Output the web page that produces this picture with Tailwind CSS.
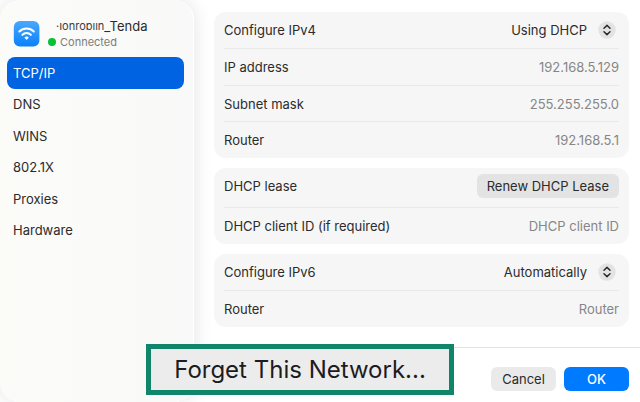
<!DOCTYPE html>
<html lang="en">
<head>
  <meta charset="UTF-8" />
  <meta name="viewport" content="width=device-width, initial-scale=1.0"/>
  <title>Network Details</title>
  <script src="https://cdn.jsdelivr.net/npm/@tailwindcss/browser@4"></script>
</head>
<body class="relative flex min-h-screen overflow-hidden bg-white font-['Inter',sans-serif] text-[13px] leading-4 text-[#2b2b2b]">

  <!-- Sidebar -->
  <aside class="w-[194px] shrink-0 rounded-[20px] border-r border-white bg-linear-to-r from-[#fbfbf8] to-[#f9f9f9] pt-[18px] shadow-[0_0_18px_2px_rgba(0,0,0,0.09)]">
    <div class="flex items-center gap-2 pl-3">
      <svg class="size-7 shrink-0" viewBox="0 0 28 28" fill="none" role="img" aria-label="Wi-Fi">
        <defs>
          <linearGradient id="wifiBg" x1="0" y1="0" x2="0" y2="1">
            <stop offset="0" stop-color="#4aa8fb"/>
            <stop offset="1" stop-color="#0a80fb"/>
          </linearGradient>
        </defs>
        <rect x="1.8" y="1" width="25.6" height="25.6" rx="6" fill="url(#wifiBg)"/>
        <path d="M7.4 11.4a10.4 10.4 0 0 1 14.4 0M10.4 14.8a6.2 6.2 0 0 1 8.4 0" stroke="#fff" stroke-width="2.1" stroke-linecap="round"/>
        <path d="M14.6 20l-2.3-2.4a3.3 3.3 0 0 1 4.6 0z" fill="#fff"/>
      </svg>
      <div>
        <p class="flex pl-2">
          <!-- network name is partly smudged out -->
          <span class="relative text-[11px] text-[#3c3c44]">
            ·Ionroblin
            <span class="absolute inset-x-0 top-0 h-[5px] bg-[#fafaf9]"></span>
            <span class="absolute inset-x-0 bottom-0 h-1 bg-[#fafaf9]"></span>
          </span>
          <span>_Tenda</span>
        </p>
        <p class="flex items-center gap-1 text-[11px] text-[#7c7c7c]">
          <span class="size-2 rounded-full bg-[#07c232]"></span>
          Connected
        </p>
      </div>
    </div>

    <nav class="mt-[7px] grid h-[189px] grid-rows-6 pr-[9px] pl-[7px]">
      <a href="#" class="flex items-center rounded-lg bg-[#0063e1] px-[6px] text-white">TCP/IP</a>
      <a href="#" class="flex items-center px-[6px]">DNS</a>
      <a href="#" class="flex items-center px-[6px]">WINS</a>
      <a href="#" class="flex items-center px-[6px]">802.1X</a>
      <a href="#" class="flex items-center px-[6px]">Proxies</a>
      <a href="#" class="flex items-center px-[6px]">Hardware</a>
    </nav>
  </aside>

  <!-- Settings -->
  <main class="flex min-w-0 flex-1 flex-col">
    <form class="flex flex-1 flex-col">
      <div class="flex flex-1 flex-col gap-[10px] pt-3 pr-[11px] pb-5 pl-5">
        <section class="rounded-xl bg-[#f6f6f6]/95 px-[10px]">
          <div class="flex h-[37px] items-center justify-between border-b border-[#e9e9e9]">
            <label for="ipv4">Configure IPv4</label>
            <div class="relative flex items-center">
              <select id="ipv4" class="appearance-none pr-8 [text-align-last:right]">
                <option>Using DHCP</option>
                <option>Manually</option>
                <option>Off</option>
              </select>
              <svg class="pointer-events-none absolute right-[3px] size-[18px]" viewBox="0 0 18 18" fill="none">
                <circle cx="9" cy="9" r="8.7" fill="#e3e3e3"/>
                <path d="M6 7.2l3-2.8 3 2.8M6 10.8l3 2.8 3-2.8" stroke="#2b2b2b" stroke-width="1.5" stroke-linecap="round" stroke-linejoin="round"/>
              </svg>
            </div>
          </div>
          <div class="flex h-[37px] items-center justify-between border-b border-[#e9e9e9]">
            <label for="ip">IP address</label>
            <input id="ip" type="text" value="192.168.5.129" readonly class="w-32 text-right text-[#868686]"/>
          </div>
          <div class="flex h-[36px] items-center justify-between border-b border-[#e9e9e9]">
            <label for="mask">Subnet mask</label>
            <input id="mask" type="text" value="255.255.255.0" readonly class="w-32 text-right text-[#868686]"/>
          </div>
          <div class="flex h-[36px] items-center justify-between">
            <label for="router4">Router</label>
            <input id="router4" type="text" value="192.168.5.1" readonly class="w-32 text-right text-[#868686]"/>
          </div>
        </section>

        <section class="rounded-xl bg-[#f6f6f6]/95 px-[10px]">
          <div class="flex h-10 items-center justify-between border-b border-[#e9e9e9] pb-[3px]">
            <span>DHCP lease</span>
            <button type="button" class="h-6 rounded-md bg-[#e3e3e3] px-[10px]">Renew DHCP Lease</button>
          </div>
          <div class="flex h-[36px] items-center justify-between">
            <label for="client">DHCP client ID (if required)</label>
            <input id="client" type="text" placeholder="DHCP client ID" class="w-32 text-right placeholder:text-[#868686]"/>
          </div>
        </section>

        <section class="rounded-xl bg-[#f6f6f6]/95 px-[10px]">
          <div class="flex h-[37px] items-center justify-between border-b border-[#e9e9e9]">
            <label for="ipv6">Configure IPv6</label>
            <div class="relative flex items-center">
              <select id="ipv6" class="appearance-none pr-8 [text-align-last:right]">
                <option>Automatically</option>
                <option>Manually</option>
                <option>Link-Local Only</option>
              </select>
              <svg class="pointer-events-none absolute right-[3px] size-[18px]" viewBox="0 0 18 18" fill="none">
                <circle cx="9" cy="9" r="8.7" fill="#e3e3e3"/>
                <path d="M6 7.2l3-2.8 3 2.8M6 10.8l3 2.8 3-2.8" stroke="#2b2b2b" stroke-width="1.5" stroke-linecap="round" stroke-linejoin="round"/>
              </svg>
            </div>
          </div>
          <div class="flex h-[36px] items-center justify-between">
            <label for="router6">Router</label>
            <input id="router6" type="text" placeholder="Router" class="w-32 text-right placeholder:text-[#868686]"/>
          </div>
        </section>
      </div>

      <footer class="flex justify-end gap-2 border-t border-[#e4e4e4] pt-[19px] pr-[11px] pb-[11px]">
        <button type="button" class="h-6 w-[65px] rounded-md bg-[#eaeaea]">Cancel</button>
        <button type="submit" class="h-6 w-[65px] rounded-md bg-[#007aff] font-medium text-white">OK</button>
      </footer>
    </form>
  </main>

  <!-- Highlighted action floating above the sheet -->
  <button type="button" class="absolute bottom-[7px] left-[146px] h-[51px] w-[308px] border-[5px] border-[#0f8669] bg-[#ececec] text-2xl text-[#1c1c1e]">Forget This Network...</button>
</body>
</html>
